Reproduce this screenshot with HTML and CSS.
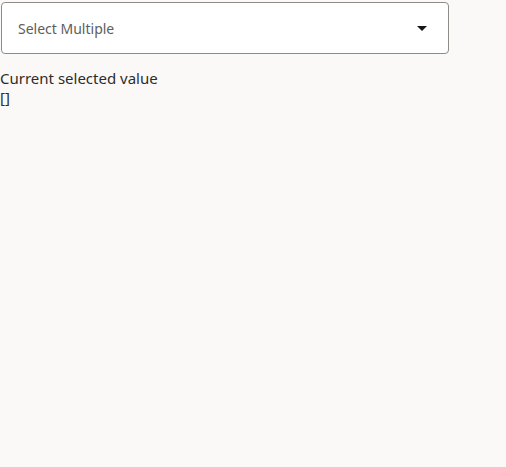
FILE: index.html
```html
<!DOCTYPE html>
<html>
<head>
<meta charset="utf-8">
<link rel="stylesheet" href="styles.css">
</head>
<body>
<div class="page">
  <div class="select">
    <span class="placeholder">Select Multiple</span>
    <svg class="arrow" width="10" height="5" viewBox="0 0 10 5"><path d="M0 0H10L5 5Z" fill="#161513"/></svg>
  </div>
  <div class="label">Current selected value</div>
  <div class="value">[]</div>
</div>
</body>
</html>
```
FILE: styles.css
```css
html, body {
  margin: 0;
  padding: 0;
  background: #faf9f8;
  font-family: "Noto Sans", "Open Sans", sans-serif;
  color: #2e2c2a;
}
.page {
  padding: 2px 0 0 1px;
}
.select {
  box-sizing: border-box;
  width: 448px;
  height: 52px;
  background: #fff;
  border: 1px solid #8f8c88;
  border-radius: 4px;
  display: flex;
  align-items: center;
  justify-content: space-between;
  padding: 1px 21px 0 16px;
}
.placeholder {
  font-size: 14px;
  color: #605d5a;
}
.arrow {
  display: block;
}
.label {
  margin-top: 15px;
  font-size: 15px;
  line-height: 19px;
  margin-left: -1px;
}
.value {
  font-size: 15px;
  line-height: 19px;
  margin-left: -1px;
}
```
